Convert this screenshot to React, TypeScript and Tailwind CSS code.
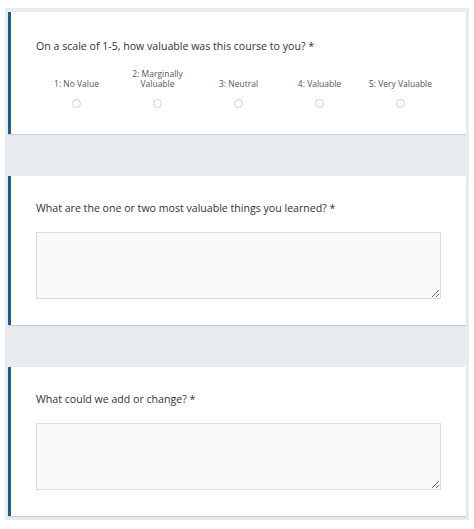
import React from "react";

const labels = [
  ["1: No Value"],
  ["2: Marginally", "Valuable"],
  ["3: Neutral"],
  ["4: Valuable"],
  ["5: Very Valuable"],
];

function Card({ children, className = "" }: { children: React.ReactNode; className?: string }) {
  return (
    <div
      className={
        "bg-white border-l-[3px] border-[#1e5f84] shadow-[0_1px_1px_rgba(0,0,0,0.12)] pl-[25px] pr-[25px] pb-[26px] " +
        className
      }
    >
      {children}
    </div>
  );
}

export default function App() {
  return (
    <div className="min-h-[529px] bg-white pt-[8px] px-[5px]" style={{ fontFamily: '"Open Sans", sans-serif' }}>
      <div className="bg-[#e9ecef] px-[3px] pt-[4px] pb-[4px] flex flex-col gap-[42px]">
        <Card className="pt-[27px]">
          <div className="text-[10.6px] leading-[15px] text-[#333]">On a scale of 1-5, how valuable was this course to you? *</div>
          <div className="grid grid-cols-5 mt-[15px]">
            {labels.map((l, i) => (
              <div key={i} className="flex flex-col items-center">
                <div className="h-[20px] flex flex-col justify-end items-center text-[8.5px] leading-[10px] text-[#555] text-center">
                  {l.map((t, j) => (
                    <div key={j}>{t}</div>
                  ))}
                </div>
                <div className="mt-[10px] w-[9px] h-[9px] rounded-full border border-[#cfcfcf] bg-white" />
              </div>
            ))}
          </div>
        </Card>
        <Card className="pt-[25px]">
          <div className="text-[10.6px] leading-[15px] text-[#333]">What are the one or two most valuable things you learned? *</div>
          <textarea className="block w-full h-[67px] mt-[16px] bg-[#fafafa] border border-[#dddddd] outline-none" />
        </Card>
        <Card className="pt-[25px]">
          <div className="text-[10.6px] leading-[15px] text-[#333]">What could we add or change? *</div>
          <textarea className="block w-full h-[67px] mt-[16px] bg-[#fafafa] border border-[#dddddd] outline-none" />
        </Card>
      </div>
    </div>
  );
}
